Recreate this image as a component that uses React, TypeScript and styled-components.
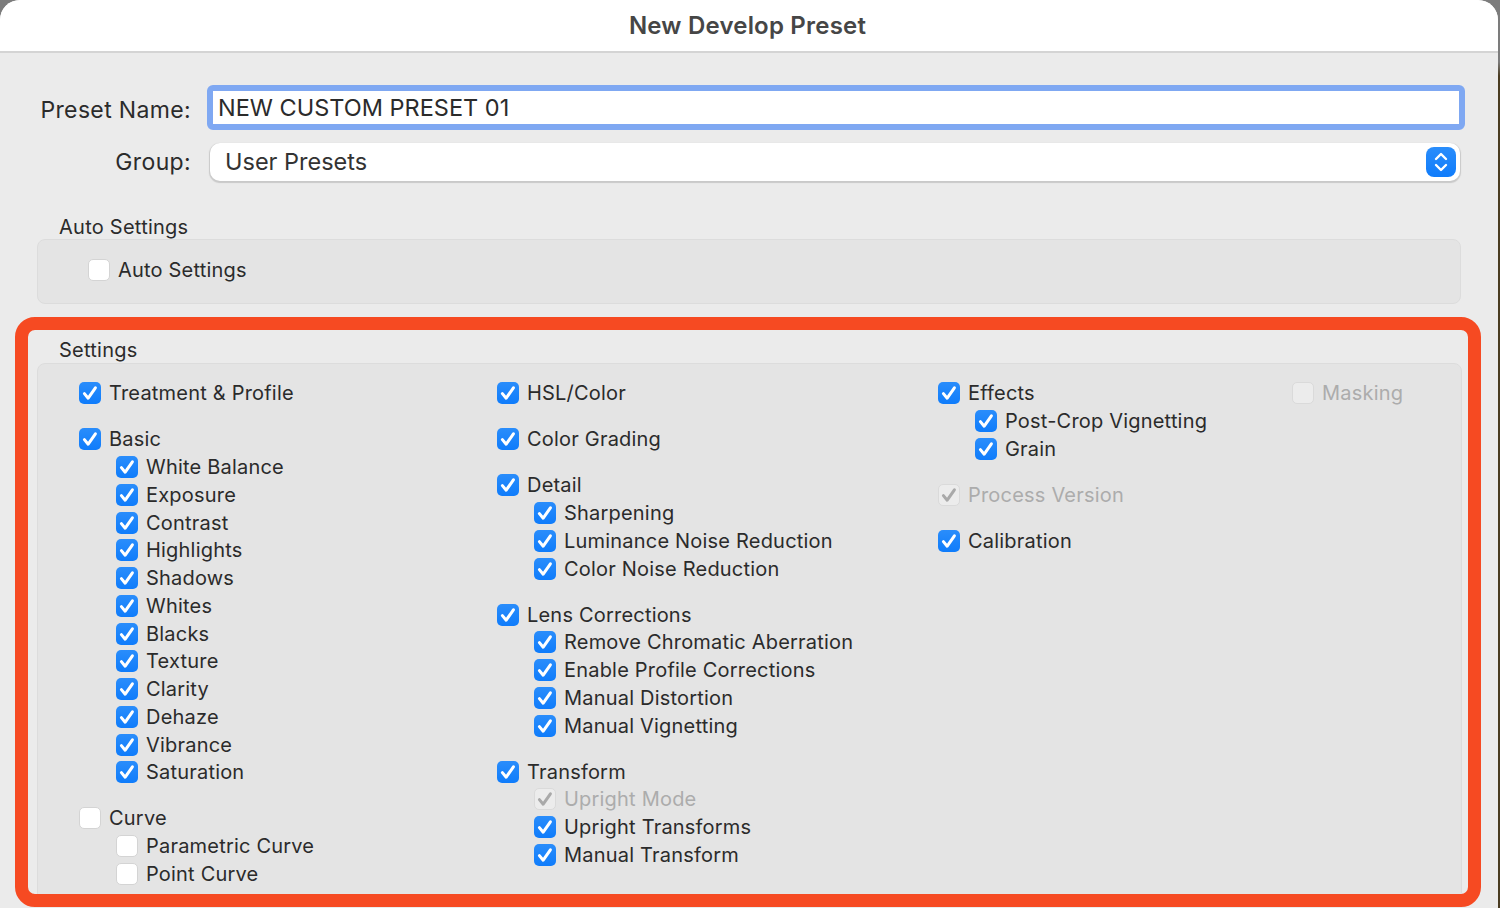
import { createGlobalStyle, styled } from "styled-components";

type Item = { label: string; on?: boolean; off?: boolean; sub?: boolean };

const columnOne: Item[][] = [
  [{ label: "Treatment & Profile", on: true }],
  [
    { label: "Basic", on: true },
    ...[
      "White Balance",
      "Exposure",
      "Contrast",
      "Highlights",
      "Shadows",
      "Whites",
      "Blacks",
      "Texture",
      "Clarity",
      "Dehaze",
      "Vibrance",
      "Saturation",
    ].map((label) => ({ label, on: true, sub: true })),
  ],
  [
    { label: "Curve" },
    { label: "Parametric Curve", sub: true },
    { label: "Point Curve", sub: true },
  ],
];

const columnTwo: Item[][] = [
  [{ label: "HSL/Color", on: true }],
  [{ label: "Color Grading", on: true }],
  [
    { label: "Detail", on: true },
    { label: "Sharpening", on: true, sub: true },
    { label: "Luminance Noise Reduction", on: true, sub: true },
    { label: "Color Noise Reduction", on: true, sub: true },
  ],
  [
    { label: "Lens Corrections", on: true },
    { label: "Remove Chromatic Aberration", on: true, sub: true },
    { label: "Enable Profile Corrections", on: true, sub: true },
    { label: "Manual Distortion", on: true, sub: true },
    { label: "Manual Vignetting", on: true, sub: true },
  ],
  [
    { label: "Transform", on: true },
    { label: "Upright Mode", on: true, off: true, sub: true },
    { label: "Upright Transforms", on: true, sub: true },
    { label: "Manual Transform", on: true, sub: true },
  ],
];

const columnThree: Item[][] = [
  [
    { label: "Effects", on: true },
    { label: "Post-Crop Vignetting", on: true, sub: true },
    { label: "Grain", on: true, sub: true },
  ],
  [{ label: "Process Version", on: true, off: true }],
  [{ label: "Calibration", on: true }],
];

const columnFour: Item[][] = [[{ label: "Masking", off: true }]];

const Check = ({ label, on, off, sub }: Item) => (
  <Row $sub={sub}>
    <Box $on={on} $off={off}>
      {on && (
        <svg width="16" height="16" viewBox="0 0 16 16" fill="none">
          <path
            d="M2.4 8.6 L6.2 13.2 L13.4 2.8"
            stroke={off ? "#a9a9a9" : "#fff"}
            strokeWidth="3"
            strokeLinecap="round"
            strokeLinejoin="round"
          />
        </svg>
      )}
    </Box>
    <Label $off={off}>{label}</Label>
  </Row>
);

const Column = ({ groups }: { groups: Item[][] }) => (
  <ColumnWrap>
    {groups.map((group) => (
      <div key={group[0].label}>
        {group.map((item) => (
          <Check key={item.label} {...item} />
        ))}
      </div>
    ))}
  </ColumnWrap>
);

const App = () => {
  return (
    <>
      <GlobalStyle />
      <Window>
        <TitleBar>New Develop Preset</TitleBar>
        <Form>
          <FormRow>
            <FieldLabel>Preset Name:</FieldLabel>
            <NameInput>NEW CUSTOM PRESET 01</NameInput>
          </FormRow>
          <GroupRow>
            <GroupLabel>Group:</GroupLabel>
            <Select>
              <SelectText>User Presets</SelectText>
              <Stepper>
                <svg width="16" height="24" viewBox="0 0 16 24" fill="none">
                  <path
                    d="M3 9 L8 4 L13 9 M3 15 L8 20 L13 15"
                    stroke="#fff"
                    strokeWidth="2.4"
                    strokeLinecap="round"
                    strokeLinejoin="round"
                  />
                </svg>
              </Stepper>
            </Select>
          </GroupRow>
        </Form>
        <AutoSection>
          <Legend>Auto Settings</Legend>
          <AutoPanel>
            <Check label="Auto Settings" />
          </AutoPanel>
        </AutoSection>
        <Highlight>
          <SettingsLegend>Settings</SettingsLegend>
          <SettingsPanel>
            <Column groups={columnOne} />
            <Column groups={columnTwo} />
            <Column groups={columnThree} />
            <Column groups={columnFour} />
          </SettingsPanel>
        </Highlight>
      </Window>
    </>
  );
};

export default App;

const GlobalStyle = createGlobalStyle`
  html, body {
    margin: 0;
    padding: 0;
    height: 100%;
    overflow: hidden;
    background: linear-gradient(to bottom, #7c7c7c 0, #7c7c7c 62px, #4a3c22 76px);
  }
`;

const Window = styled.div`
  width: 1498px;
  height: 908px;
  overflow: hidden;
  background: #ebebeb;
  border-radius: 20px 20px 0 0;
  font-family: Inter, "Noto Sans", sans-serif;
  color: #2b2b2b;
`;

const TitleBar = styled.div`
  height: 53px;
  box-sizing: border-box;
  background: #fff;
  border-bottom: 2px solid #d4d4d4;
  display: flex;
  align-items: center;
  justify-content: center;
  padding-right: 3px;
  font-size: 24px;
  font-weight: 600;
  letter-spacing: 0.2px;
  color: #464646;
`;

const Form = styled.div`
  padding-top: 32px;
`;

const FormRow = styled.div`
  display: flex;
  align-items: center;
  gap: 16px;
`;

const GroupRow = styled(FormRow)`
  margin-top: 13px;
  gap: 19px;
`;

const FieldLabel = styled.div`
  width: 191px;
  text-align: right;
  font-size: 23px;
  letter-spacing: 0.35px;
  padding-top: 5px;
  box-sizing: border-box;
  flex: none;
`;

const GroupLabel = styled(FieldLabel)`
  padding-top: 0;
`;

const NameInput = styled.div`
  width: 1258px;
  height: 45px;
  box-sizing: border-box;
  border: 6px solid #7fa8f2;
  border-radius: 6px;
  background: #fff;
  padding-left: 5px;
  font-size: 23.5px;
  line-height: 34px;
  color: #2b2b2b;
`;

const Select = styled.div`
  width: 1250px;
  height: 38px;
  box-sizing: border-box;
  background: #fff;
  border-radius: 10px;
  box-shadow: 0 1px 1px 1px #c9c9c9;
  display: flex;
  align-items: center;
  justify-content: space-between;
  padding: 0 4px 0 15px;
  font-size: 23.5px;
  color: #333;
`;

const SelectText = styled.span`
  padding-bottom: 2px;
`;

const Stepper = styled.div`
  width: 30px;
  height: 30px;
  border-radius: 8px;
  background: linear-gradient(to bottom, #2a8dfb, #0f7cfb);
  display: flex;
  align-items: center;
  justify-content: center;
`;

const AutoSection = styled.div`
  padding: 0 37px;
  margin-top: 33px;
`;

const Legend = styled.div`
  height: 25px;
  padding-left: 22px;
  font-size: 20px;
  letter-spacing: 0.25px;
  line-height: 27px;
`;

const SettingsLegend = styled(Legend)`
  height: 26px;
  line-height: 27px;
`;

const AutoPanel = styled.div`
  height: 65px;
  box-sizing: border-box;
  background: #e4e4e4;
  border: 1px solid #dcdcdc;
  border-radius: 8px;
  padding: 16px 0 0 50px;
`;

const Highlight = styled.div`
  margin: 13px 17px 0 15px;
  height: 590px;
  box-sizing: border-box;
  border: 13px solid #f64a22;
  border-radius: 20px;
  padding: 7px 6px 0 9px;
  overflow: hidden;
`;

const SettingsPanel = styled.div`
  background: #e4e4e4;
  border: 1px solid #dcdcdc;
  border-radius: 8px 8px 0 0;
  height: 560px;
  box-sizing: border-box;
  padding: 15.5px 0 0 41px;
  display: grid;
  grid-template-columns: 418px 441px 354px 1fr;
`;

const ColumnWrap = styled.div`
  display: flex;
  flex-direction: column;
  gap: 18.25px;
`;

const Row = styled.div<{ $sub?: boolean }>`
  height: 27.75px;
  display: flex;
  align-items: center;
  gap: 8px;
  margin-left: ${(p) => (p.$sub ? "37px" : "0")};
`;

const Box = styled.div<{ $on?: boolean; $off?: boolean }>`
  width: 22px;
  height: 22px;
  box-sizing: border-box;
  flex: none;
  border-radius: 5px;
  display: flex;
  align-items: center;
  justify-content: center;
  background: ${(p) =>
    p.$off
      ? "#ececec"
      : p.$on
        ? "linear-gradient(to bottom, #2a8dfb, #0f7cfb)"
        : "#fff"};
  border: ${(p) =>
    p.$on && !p.$off ? "none" : `1px solid ${p.$off ? "#dadada" : "#d4d4d4"}`};
`;

const Label = styled.span<{ $off?: boolean }>`
  font-size: 20px;
  letter-spacing: 0.2px;
  white-space: nowrap;
  color: ${(p) => (p.$off ? "#acacac" : "#2b2b2b")};
`;
